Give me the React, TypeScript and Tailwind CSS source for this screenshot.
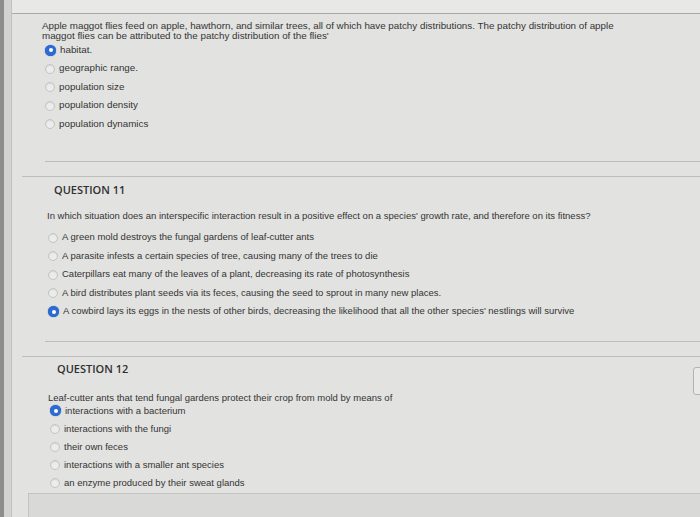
import React from 'react';

type Option = { label: string; checked?: boolean };

const q10: Option[] = [
  { label: 'habitat.', checked: true },
  { label: 'geographic range.' },
  { label: 'population size' },
  { label: 'population density' },
  { label: 'population dynamics' },
];

const q11: Option[] = [
  { label: 'A green mold destroys the fungal gardens of leaf-cutter ants' },
  { label: 'A parasite infests a certain species of tree, causing many of the trees to die' },
  { label: 'Caterpillars eat many of the leaves of a plant, decreasing its rate of photosynthesis' },
  { label: 'A bird distributes plant seeds via its feces, causing the seed to sprout in many new places.' },
  {
    label:
      "A cowbird lays its eggs in the nests of other birds, decreasing the likelihood that all the other species' nestlings will survive",
    checked: true,
  },
];

const q12: Option[] = [
  { label: 'interactions with a bacterium', checked: true },
  { label: 'interactions with the fungi' },
  { label: 'their own feces' },
  { label: 'interactions with a smaller ant species' },
  { label: 'an enzyme produced by their sweat glands' },
];

// Radio bullet, blue with white dot when selected
const Radio = ({ checked }: { checked?: boolean }) =>
  checked ? (
    <span className="w-[11px] h-[11px] rounded-full bg-[#2d6ad3] flex items-center justify-center shrink-0 shadow-[0_0_1px_#1d4fa8]">
      <span className="w-[4px] h-[4px] rounded-full bg-white" />
    </span>
  ) : (
    <span className="w-[10px] h-[10px] rounded-full bg-[#ececeb] border border-[#c4c4c4] shrink-0 shadow-[inset_0_1px_1px_#d6d6d6]" />
  );

const OptionList = ({ options, rowClass, offset, gap }: { options: Option[]; rowClass: string; offset: string; gap: string }) => (
  <div className={`flex flex-col ${offset}`}>
    {options.map((o, i) => (
      <div key={i} className={`flex items-center ${rowClass} ${gap}`}>
        <Radio checked={o.checked} />
        <span className="whitespace-nowrap">{o.label}</span>
      </div>
    ))}
  </div>
);

const Separator = () => (
  <>
    <div className="h-px bg-[#bdbdbb] ml-[33px]" />
    <div className="h-px bg-[#bdbdbb] ml-[10px] mt-[14px]" />
  </>
);

export default function App() {
  return (
    <div
      className="w-[700px] h-[517px] flex bg-[#e2e2e0] text-[#343434] overflow-hidden"
      style={{ fontFamily: '"Liberation Sans", Arial, sans-serif' }}
    >
      {/* screen edge */}
      <div className="w-[4px] bg-[#8d8d8d] shrink-0" />
      <div className="w-[8px] bg-[#d3d3d2] border-r border-[#c2c2c2] shrink-0" />

      <div className="flex-1 flex flex-col min-w-0">
        {/* previous question box edge */}
        <div className="h-[14px] bg-[#e8e8e7] border-b border-[#a8a8a8] shrink-0" />

        {/* Question 10 (answers) */}
        <div className="pl-[30px] text-[9.8px]">
          <p className="mt-[7px] leading-[10px] whitespace-nowrap">
            Apple maggot flies feed on apple, hawthorn, and similar trees, all of which have patchy distributions. The patchy distribution of apple
            <br />
            maggot flies can be attributed to the patchy distribution of the flies'
          </p>
          <OptionList options={q10} rowClass="h-[18.5px]" offset="ml-[3px]" gap="gap-[4px]" />
        </div>

        <div className="mt-[27px]">
          <Separator />
        </div>

        {/* Question 11 */}
        <div className="text-[9.5px]">
          <h2
            className="mt-[7px] ml-[42px] text-[11px] leading-[12px] font-semibold text-[#303030]"
            style={{ fontFamily: '"Open Sans", sans-serif' }}
          >
            QUESTION 11
          </h2>
          <p className="mt-[15px] ml-[35px] leading-[10px] whitespace-nowrap">
            In which situation does an interspecific interaction result in a positive effect on a species' growth rate, and therefore on its fitness?
          </p>
          <OptionList options={q11} rowClass="h-[18.5px]" offset="ml-[36px] mt-[7.75px]" gap="gap-[4px]" />
        </div>

        <div className="mt-[20px]">
          <Separator />
        </div>

        {/* Question 12 */}
        <div className="relative text-[9.5px]">
          <div className="absolute right-[-4px] top-[10px] w-[11px] h-[28px] rounded-l-[3px] border border-[#b3b3b3] bg-[#e9e9e8]" />
          <h2
            className="mt-[6px] ml-[45px] text-[11px] leading-[12px] font-semibold text-[#303030]"
            style={{ fontFamily: '"Open Sans", sans-serif' }}
          >
            QUESTION 12
          </h2>
          <p className="mt-[18px] ml-[36px] leading-[10px] whitespace-nowrap">
            Leaf-cutter ants that tend fungal gardens protect their crop from mold by means of
          </p>
          <OptionList options={q12} rowClass="h-[18px]" offset="ml-[38px] mt-[-1px]" gap="gap-[4px]" />
        </div>

        {/* next question box */}
        <div className="mt-[1px] ml-[16px] flex-1 bg-[#d9d9d7] border-t border-l border-[#c3c3c1]" />
      </div>
    </div>
  );
}
